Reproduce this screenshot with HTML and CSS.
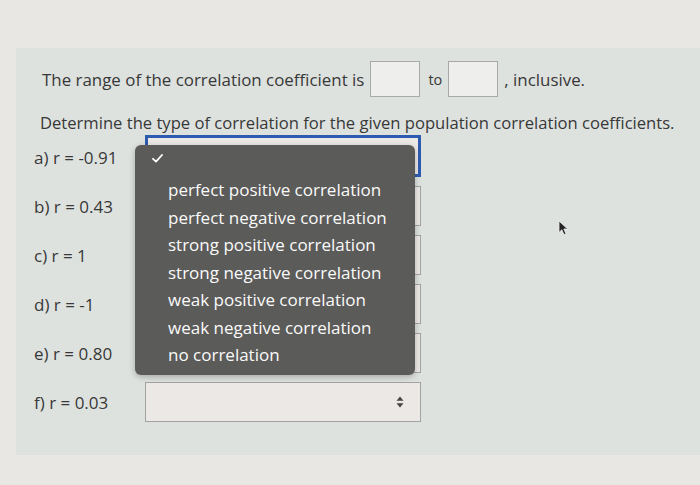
FILE: index.html
```html
<!DOCTYPE html>
<html lang="en">
<head>
  <meta charset="UTF-8">
  <meta name="viewport" content="width=device-width, initial-scale=1.0">
  <title>Correlation</title>
  <link rel="stylesheet" href="styles.css">
</head>
<body>
  <div class="top-band"></div>

  <div class="panel">
    <div class="range">
      <span>The range of the correlation coefficient is</span>
      <span class="blank"></span>
      <span class="to">to</span>
      <span class="blank"></span>
      <span>, inclusive.</span>
    </div>

    <p class="prompt">Determine the type of correlation for the given population correlation coefficients.</p>

    <div class="rows">
      <div class="row">
        <span class="label">a) r = -0.91</span>
        <div class="select focused"></div>
      </div>
      <div class="row">
        <span class="label">b) r = 0.43</span>
        <div class="select"></div>
      </div>
      <div class="row">
        <span class="label">c) r = 1</span>
        <div class="select"></div>
      </div>
      <div class="row">
        <span class="label">d) r = -1</span>
        <div class="select"></div>
      </div>
      <div class="row">
        <span class="label">e) r = 0.80</span>
        <div class="select"></div>
      </div>
      <div class="row">
        <span class="label">f) r = 0.03</span>
        <div class="select">
          <svg class="updown" width="8" height="12" viewBox="0 0 8 12">
            <path d="M4 0.5 L7.5 4.8 H0.5 Z M4 11.5 L7.5 7.2 H0.5 Z" fill="#444"/>
          </svg>
        </div>
      </div>
    </div>

    <!-- открытый список для a) -->
    <div class="menu">
      <div class="check">
        <svg width="11" height="9" viewBox="0 0 11 9">
          <path d="M1 4.8 L4 7.6 L10 1" fill="none" stroke="#fff" stroke-width="1.8" stroke-linecap="round" stroke-linejoin="round"/>
        </svg>
      </div>
      <ul class="options">
        <li>perfect positive correlation</li>
        <li>perfect negative correlation</li>
        <li>strong positive correlation</li>
        <li>strong negative correlation</li>
        <li>weak positive correlation</li>
        <li>weak negative correlation</li>
        <li>no correlation</li>
      </ul>
    </div>

    <svg class="cursor" width="12" height="16" viewBox="0 0 12 16">
      <path d="M1 1 L1 12.5 L3.8 9.8 L6 14.6 L8 13.7 L5.8 9 L9.6 9 Z" fill="#222" stroke="#eee" stroke-width="0.8"/>
    </svg>
  </div>

  <div class="bottom-band"></div>
</body>
</html>
```

FILE: styles.css
```css
body {
  margin: 0;
  font-family: "Open Sans", "Liberation Sans", sans-serif;
  color: #383838;
  background-color: #e8e7e4;
  overflow: hidden;
}
.top-band {
  height: 48px;
}
.panel {
  position: relative;
  margin-left: 16px;
  height: 407px;
  background-color: #dee2df;
}
.bottom-band {
  height: 30px;
}
.range {
  display: flex;
  align-items: center;
  padding: 13px 0 0 26px;
  height: 36px;
  font-size: 16.9px;
}
.blank {
  width: 48px;
  height: 34px;
  margin: 0 6px 0 6px;
  border: 1px solid #a9aaa8;
  background-color: #eeeeec;
}
.to {
  font-size: 14.5px;
  margin-left: 2px;
}
.prompt {
  margin: 16px 0 0 24px;
  font-size: 16.6px;
  line-height: 20px;
}
.rows {
  display: flex;
  flex-direction: column;
  gap: 9px;
  margin-top: 4px;
  padding-left: 18px;
}
.row {
  display: grid;
  grid-template-columns: 111px 276px;
  align-items: center;
  height: 40px;
}
.label {
  font-size: 17px;
}
.select {
  border: 1px solid #a3a3a3;
  background-color: #ebe8e5;
  display: flex;
  align-items: center;
  justify-content: flex-end;
  padding-right: 16px;
  box-sizing: border-box;
  height: 40px;
}
.select.focused {
  border: 3px solid #2c5bb0;
  height: 42px;
  margin-top: -2px;
}
.menu {
  position: absolute;
  left: 119px;
  top: 97px;
  width: 280px;
  height: 230px;
  box-sizing: border-box;
  padding: 2px 0 6px 0;
  background-color: #5b5b59;
  border-radius: 6px;
  box-shadow: 0 2px 6px rgba(0, 0, 0, 0.25);
  color: #fafafa;
}
.check {
  height: 22px;
  display: flex;
  align-items: center;
  padding-left: 17px;
}
.options {
  list-style: none;
  margin: 7px 0 0 0;
  padding: 0 0 0 33px;
}
.options li {
  height: 27.5px;
  line-height: 27.5px;
  font-size: 17px;
  font-weight: 500;
}
.cursor {
  position: absolute;
  left: 542px;
  top: 172px;
}
```
